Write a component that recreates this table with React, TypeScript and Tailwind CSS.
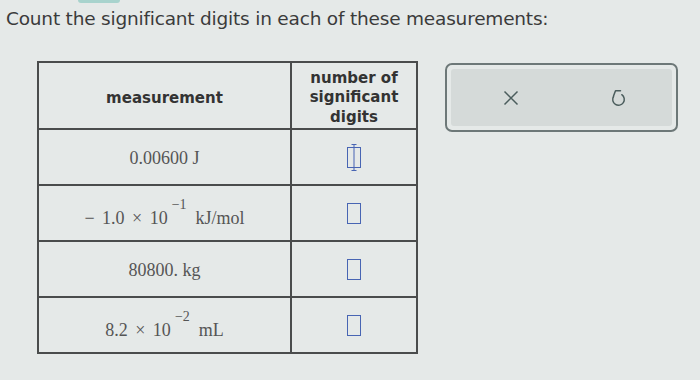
import React from "react";

const serif = { fontFamily: '"Liberation Serif", "Times New Roman", serif' };

function Sup({ base, exp, unit }: { base: string; exp: string; unit: string }) {
  return (
    <span className="relative top-[4px] inline-flex items-baseline">
      <span className="[word-spacing:3px]">{base}</span>
      <span className="relative -top-[15px] ml-[4px] text-[14px]">{exp}</span>
      <span className="ml-[9px]">{unit}</span>
    </span>
  );
}

function AnswerBox({ focused }: { focused?: boolean }) {
  return (
    <div className="relative mx-auto h-[21px] w-[14px] border-[1.5px] border-[#4865b3]">
      {focused && (
        <div className="absolute left-1/2 top-[-4px] h-[27px] w-[5px] -translate-x-1/2 border-y border-x-0 border-[#4865b3]">
          <div className="mx-auto h-full w-px bg-[#4865b3]" />
        </div>
      )}
    </div>
  );
}

const rows = [
  { cell: <span>0.00600 J</span>, focused: true },
  { cell: <Sup base="− 1.0 × 10" exp="−1" unit="kJ/mol" /> },
  { cell: <span>80800. kg</span> },
  { cell: <Sup base="8.2 × 10" exp="−2" unit="mL" /> },
];

export default function App() {
  return (
    <div
      className="relative h-[380px] w-[700px] overflow-hidden bg-[#e5e9e8] text-[#3b3b3b]"
      style={{ fontFamily: '"DejaVu Sans", Verdana, sans-serif' }}
    >
      <div className="absolute left-[78px] top-0 h-[3px] w-[42px] rounded-b bg-[#a8d3cd]" />
      <h1 className="pl-[6px] pt-[6px] text-[18.5px] font-normal leading-[26px] tracking-[-0.2px]">
        Count the significant digits in each of these measurements:
      </h1>
      <div className="mt-[29px] flex items-start pl-[37px]">
        <table className="border-collapse">
          <thead>
            <tr className="h-[67px]">
              <th className="w-[253px] border-2 border-[#4a4c4c] pt-[5px] text-[15px] font-bold text-[#333]">
                measurement
              </th>
              <th className="w-[126px] border-2 border-[#4a4c4c] pt-[5px] text-[15px] font-bold leading-[19.5px] text-[#333]">
                number of
                <br />
                significant
                <br />
                digits
              </th>
            </tr>
          </thead>
          <tbody>
            {rows.map((r, i) => (
              <tr key={i} className="h-[56px]">
                <td
                  className="border-2 border-[#4a4c4c] pt-[2px] text-center text-[18px] text-[#555]"
                  style={serif}
                >
                  {r.cell}
                </td>
                <td className="border-2 border-[#4a4c4c]">
                  <AnswerBox focused={r.focused} />
                </td>
              </tr>
            ))}
          </tbody>
        </table>
        <div className="ml-[27px] mt-[2px] h-[69px] w-[233px] rounded-[7px] border-2 border-[#6d7878] p-[4px]">
          <div className="flex h-full items-center rounded-[3px] bg-[#d5dad9]">
            <div className="flex flex-1 justify-center pl-[6px]">
              <svg width="16" height="16" viewBox="0 0 16 16" fill="none" stroke="#4b5d5d" strokeWidth="1.5">
                <path d="M1.5 1.5 L14.5 14.5 M14.5 1.5 L1.5 14.5" />
              </svg>
            </div>
            <div className="flex flex-1 justify-center">
              <svg width="15" height="18" viewBox="0 0 15 18" fill="none" stroke="#4b5d5d" strokeWidth="1.5" strokeLinecap="round" strokeLinejoin="round">
                <path d="M9.5 1.8 H4.5 L2.6 6.8" />
                <path d="M2.5 7.5 A5.8 5.8 0 1 0 10.8 5.7" />
              </svg>
            </div>
          </div>
        </div>
      </div>
    </div>
  );
}
